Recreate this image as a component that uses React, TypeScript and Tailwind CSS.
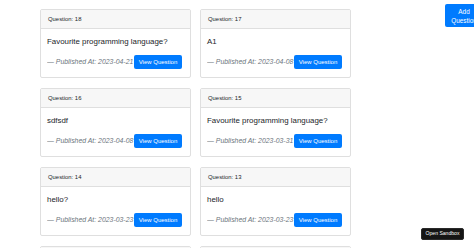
import React from 'react';

type Question = {
  id: number;
  title: string;
  publishedAt: string;
};

const questions: Question[] = [
  { id: 18, title: 'Favourite programming language?', publishedAt: '2023-04-21' },
  { id: 17, title: 'A1', publishedAt: '2023-04-08' },
  { id: 16, title: 'sdfsdf', publishedAt: '2023-04-08' },
  { id: 15, title: 'Favourite programming language?', publishedAt: '2023-03-31' },
  { id: 14, title: 'hello?', publishedAt: '2023-03-23' },
  { id: 13, title: 'hello', publishedAt: '2023-03-23' },
  { id: 12, title: 'hello', publishedAt: '2023-03-23' },
  { id: 11, title: 'hello', publishedAt: '2023-03-23' },
];

const QuestionCard = ({ question }: { question: Question }) => (
  <div className="flex h-[69px] flex-col overflow-hidden rounded-[2px] border border-[#dfdfdf] bg-white">
    {/* Header */}
    <div className="flex h-[19px] shrink-0 items-center border-b border-[#dfdfdf] bg-[#f7f7f7] px-[7px] text-[5.9px] leading-[9px] text-[#212529]">
      Question: {question.id}
    </div>

    {/* Body */}
    <div className="flex flex-col pt-[8px] pl-[6px] pr-[8px]">
      <div className="h-[10px] whitespace-nowrap text-[7.9px] leading-[10px] text-[#212529]">
        {question.title}
      </div>
      <div className="mt-[8px] flex h-[14px] items-center">
        <div className="min-w-0 flex-1 overflow-hidden whitespace-nowrap text-[6.9px] leading-[10px] text-[#6c757d]">
          {'\u2014\u00a0'}
          <span className="italic">Published At: {question.publishedAt}</span>
        </div>
        <button className="flex h-[14px] w-[48px] shrink-0 items-center justify-center rounded-[2px] bg-[#007bff] text-[6px] leading-none text-white">
          View Question
        </button>
      </div>
    </div>
  </div>
);

export default function App() {
  return (
    <div
      className="relative h-[248px] w-[474px] overflow-hidden bg-white"
      style={{ fontFamily: '"Liberation Sans", Arial, sans-serif' }}
    >
      <div className="flex items-start">
        {/* Question list */}
        <div className="ml-[40px] mt-[9px] grid grid-cols-[151px_151px] gap-x-[9px] gap-y-[10px]">
          {questions.map((q) => (
            <QuestionCard key={q.id} question={q} />
          ))}
        </div>

        {/* Add question */}
        <button className="ml-[94px] mt-[4px] w-[38px] shrink-0 rounded-[2px] bg-[#007bff] px-[5px] py-[2.5px] text-center text-[6.4px] leading-[9px] text-white">
          Add Question
        </button>
      </div>

      {/* Sandbox badge */}
      <div className="absolute left-[421px] top-[228px] flex h-[12px] w-[43px] items-center justify-center rounded-[2px] border border-[#2a2a2a] bg-[#151515] text-[5.1px] leading-none text-white">
        Open Sandbox
      </div>
    </div>
  );
}
